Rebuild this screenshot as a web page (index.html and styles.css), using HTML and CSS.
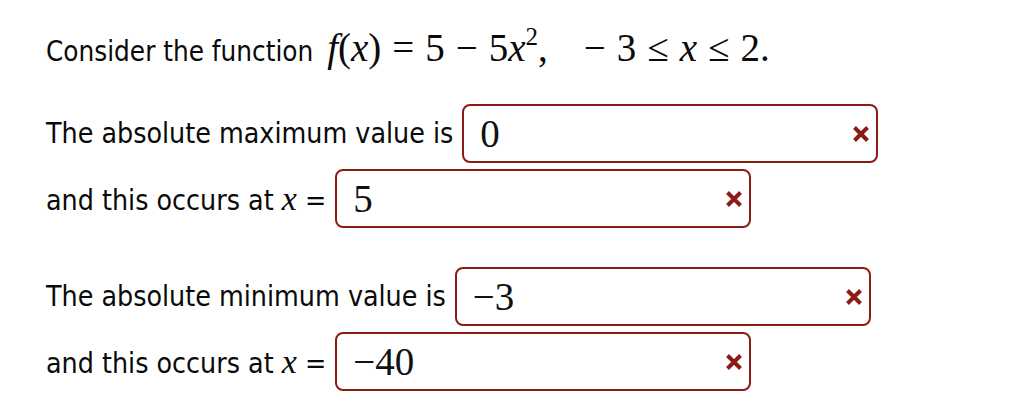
FILE: index.html
```html
<!DOCTYPE html>
<html>
<head>
<meta charset="utf-8">
<link rel="stylesheet" href="styles.css">
</head>
<body>
<div class="problem">
  <p class="stmt">Consider the function <span class="math"><i>f</i>(<i>x</i>)<span class="op">=</span>5<span class="op">−</span>5<i>x</i><sup>2</sup>,<span class="sp"></span>−<span class="thin"></span>3<span class="op">≤</span><i>x</i><span class="op">≤</span>2.</span></p>

  <div class="group">
    <div class="row">
      <span class="label">The absolute maximum value is</span>
      <div class="answer"><span class="val">0</span><svg class="xicon" viewBox="0 0 18 18"><path d="M2.5 2.5 L15.5 15.5 M15.5 2.5 L2.5 15.5"/></svg></div>
    </div>
    <div class="row">
      <span class="label">and this occurs at <i class="mvar">x</i> =</span>
      <div class="answer"><span class="val">5</span><svg class="xicon" viewBox="0 0 18 18"><path d="M2.5 2.5 L15.5 15.5 M15.5 2.5 L2.5 15.5"/></svg></div>
    </div>
  </div>

  <div class="group">
    <div class="row">
      <span class="label">The absolute minimum value is</span>
      <div class="answer"><span class="val">−3</span><svg class="xicon" viewBox="0 0 18 18"><path d="M2.5 2.5 L15.5 15.5 M15.5 2.5 L2.5 15.5"/></svg></div>
    </div>
    <div class="row">
      <span class="label">and this occurs at <i class="mvar">x</i> =</span>
      <div class="answer"><span class="val">−40</span><svg class="xicon" viewBox="0 0 18 18"><path d="M2.5 2.5 L15.5 15.5 M15.5 2.5 L2.5 15.5"/></svg></div>
    </div>
  </div>
</div>
</body>
</html>
```

FILE: styles.css
```css
html, body {
  margin: 0;
  padding: 0;
  background: #ffffff;
}
body {
  font-family: "DejaVu Sans", Verdana, sans-serif;
  font-stretch: condensed;
  color: #0a0a0a;
}
.problem {
  padding: 19px 0 0 46px;
}
.stmt {
  margin: 0;
  font-size: 27.6px;
  line-height: 58px;
  height: 58px;
}
.math {
  font-family: "Liberation Serif", "Times New Roman", serif;
  font-stretch: normal;
  font-size: 39px;
  margin-left: 6px;
}
.math i {
  font-style: italic;
}
.math sup {
  font-size: 25px;
  line-height: 0;
  vertical-align: 16px;
}
.op {
  padding: 0 11px;
}
.sp {
  display: inline-block;
  width: 36px;
}
.thin {
  display: inline-block;
  width: 11px;
}
.group {
  display: flex;
  flex-direction: column;
  gap: 6px;
}
.problem .group:nth-of-type(1) {
  margin-top: 27px;
}
.problem .group:nth-of-type(2) {
  margin-top: 39px;
}
.row {
  display: flex;
  align-items: center;
  gap: 9px;
}
.label {
  font-size: 28.3px;
  white-space: nowrap;
}
.mvar {
  font-family: "Liberation Serif", "Times New Roman", serif;
  font-stretch: normal;
  font-size: 34px;
  font-style: italic;
}
.answer {
  box-sizing: border-box;
  width: 416px;
  height: 59px;
  border: 2px solid #8c1c13;
  border-radius: 8px;
  display: flex;
  align-items: center;
  justify-content: space-between;
  padding: 0 6px 0 16px;
}
.val {
  font-family: "Liberation Serif", "Times New Roman", serif;
  font-size: 39px;
  color: #111111;
}
.xicon {
  width: 18px;
  height: 18px;
  stroke: #8c1c13;
  stroke-width: 4;
  fill: none;
}
```
